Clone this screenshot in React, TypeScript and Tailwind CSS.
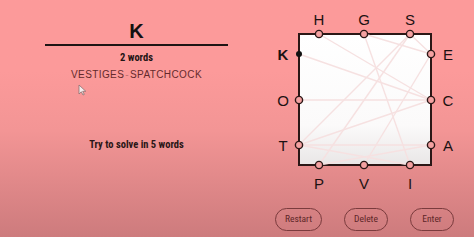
import React from 'react';

type Pt = { x: number; y: number };

// board positions in page coordinates
const P: Record<string, Pt> = {
  H: { x: 319, y: 34 },
  G: { x: 364, y: 34 },
  S: { x: 410, y: 34 },
  K: { x: 299, y: 54 },
  O: { x: 299, y: 100 },
  T: { x: 299, y: 145 },
  E: { x: 431, y: 54 },
  C: { x: 431, y: 100 },
  A: { x: 431, y: 145 },
  Pp: { x: 319, y: 165 },
  V: { x: 364, y: 165 },
  I: { x: 410, y: 165 },
};

const played: [string, string][] = [
  ['V', 'E'], ['E', 'S'], ['S', 'T'], ['T', 'I'], ['I', 'G'], ['G', 'E'],
  ['S', 'Pp'], ['Pp', 'A'], ['A', 'T'], ['T', 'C'], ['C', 'H'], ['C', 'O'], ['C', 'K'],
];

const labels: { key: string; text: string; x: number; y: number }[] = [
  { key: 'H', text: 'H', x: 319, y: 25 },
  { key: 'G', text: 'G', x: 364, y: 25 },
  { key: 'S', text: 'S', x: 410, y: 25 },
  { key: 'K', text: 'K', x: 283, y: 60 },
  { key: 'O', text: 'O', x: 283, y: 106 },
  { key: 'T', text: 'T', x: 283, y: 151 },
  { key: 'E', text: 'E', x: 448, y: 60 },
  { key: 'C', text: 'C', x: 448, y: 106 },
  { key: 'A', text: 'A', x: 448, y: 151 },
  { key: 'Pp', text: 'P', x: 319, y: 189 },
  { key: 'V', text: 'V', x: 364, y: 189 },
  { key: 'I', text: 'I', x: 410, y: 189 },
];

function Board() {
  return (
    <svg width="201" height="208" viewBox="273 0 201 208" className="block">
      <defs>
        <linearGradient id="inside" x1="0" y1="0" x2="0" y2="1">
          <stop offset="0%" stopColor="#ffffff" />
          <stop offset="70%" stopColor="#fbfafa" />
          <stop offset="100%" stopColor="#e9e6e6" />
        </linearGradient>
      </defs>
      <rect x="299" y="34" width="132" height="131" fill="url(#inside)" stroke="#2b1716" strokeWidth="2" />
      {played.map(([a, b]) => (
        <line key={a + b} x1={P[a].x} y1={P[a].y} x2={P[b].x} y2={P[b].y} stroke="#f6e1e1" strokeWidth="1.4" />
      ))}
      {Object.entries(P).map(([k, p]) =>
        k === 'K' ? (
          <circle key={k} cx={p.x} cy={p.y} r="3" fill="#111" />
        ) : (
          <circle key={k} cx={p.x} cy={p.y} r="3.6" fill="#f4a1a1" stroke="#2b1716" strokeWidth="1.4" />
        ),
      )}
      {labels.map((l) => (
        <text
          key={l.key}
          x={l.x}
          y={l.y}
          textAnchor="middle"
          fontFamily="'Liberation Sans', Arial, sans-serif"
          fontSize="15"
          fontWeight={l.key === 'K' ? 700 : 400}
          fill="#1c1212"
        >
          {l.text}
        </text>
      ))}
    </svg>
  );
}

function Cursor() {
  return (
    <svg width="9" height="12" viewBox="0 0 9 12" className="absolute left-[78px] top-[84px]">
      <path d="M1 1 L1 10 L3.3 7.8 L5 11 L6.3 10.4 L4.7 7.3 L7.8 7.3 Z" fill="#f4eded" stroke="#8a7070" strokeWidth="0.8" />
    </svg>
  );
}

const narrow = { fontFamily: "'Liberation Sans Narrow', 'Roboto Condensed', 'Liberation Sans', Arial, sans-serif" };

export default function App() {
  return (
    <div
      className="relative flex h-[237px] w-[474px] overflow-hidden bg-linear-to-b from-[#fc9a9a] from-30% via-[#f39595] via-55% to-[#cd7b7d]"
      style={{ fontFamily: "'Liberation Sans', Arial, sans-serif" }}
    >
      {/* Left panel */}
      <div className="flex w-[273px] flex-col items-center pt-[20px]">
        <div className="text-[20px] leading-[22px] font-bold text-[#141010]">K</div>
        <div className="mt-[2px] h-[2px] w-[183px] bg-[#1e1414]" />
        <div className="mt-[6px] text-[10.5px] leading-[12px] font-bold text-[#1e1414]" style={narrow}>2 words</div>
        <div className="mt-[5px] flex items-center text-[10px] leading-[12px] font-medium tracking-[0.4px] text-[#652a2c]">
          <span>VESTIGES</span>
          <span className="mx-[1px] text-[#c07070]">-</span>
          <span>SPATCHCOCK</span>
        </div>
        <div className="mt-[58px] text-[10.5px] leading-[12px] font-bold text-[#2a1616]" style={narrow}>Try to solve in 5 words</div>
      </div>

      {/* Right panel */}
      <div className="flex flex-col">
        <Board />
        <div className="ml-[2px] flex gap-[22px]" style={narrow}>
          <button className="h-[23px] w-[47px] rounded-full border border-[#7a3b3d] text-[9.5px] text-[#5e2628]">Restart</button>
          <button className="h-[23px] w-[44px] rounded-full border border-[#7a3b3d] text-[9.5px] text-[#5e2628]">Delete</button>
          <button className="h-[23px] w-[44px] rounded-full border border-[#7a3b3d] text-[9.5px] text-[#5e2628]">Enter</button>
        </div>
      </div>

      <Cursor />
    </div>
  );
}
